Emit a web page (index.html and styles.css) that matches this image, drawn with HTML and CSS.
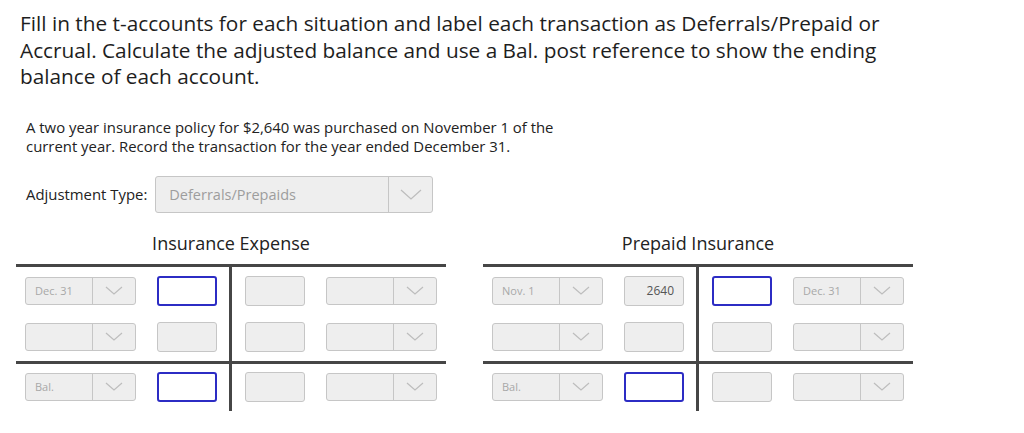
FILE: index.html
```html
<!DOCTYPE html>
<html lang="en">
<head>
    <meta charset="UTF-8">
    <meta name="viewport" content="width=device-width, initial-scale=1.0">
    <title>T-Accounts</title>
    <link rel="stylesheet" href="styles.css">
</head>
<body>
    <p class="instructions">Fill in the t-accounts for each situation and label each transaction as Deferrals/Prepaid or Accrual. Calculate the adjusted balance and use a Bal. post reference to show the ending balance of each account.</p>

    <p class="question">A two year insurance policy for $2,640 was purchased on November 1 of the<br>current year. Record the transaction for the year ended December 31.</p>

    <div class="adjustment">
        <span class="adjustment-label">Adjustment Type:</span>
        <div class="select select-large">
            <span class="select-value">Deferrals/Prepaids</span>
            <span class="select-arrow">
                <svg width="22" height="11" viewBox="0 0 22 11"><polyline points="1,1 11,10 21,1" fill="none" stroke="#bdbdbd" stroke-width="1.3"/></svg>
            </span>
        </div>
    </div>

    <div class="accounts">
        <!-- Insurance Expense -->
        <div class="t-account">
            <div class="t-title">Insurance Expense</div>
            <div class="t-body">
                <div class="t-side debit">
                    <div class="t-row">
                        <div class="select"><span class="select-value">Dec. 31</span><span class="select-arrow"><svg width="18" height="9" viewBox="0 0 18 9"><polyline points="1,1 9,8 17,1" fill="none" stroke="#bdbdbd" stroke-width="1.2"/></svg></span></div>
                        <div class="amount active"></div>
                    </div>
                    <div class="t-row">
                        <div class="select"><span class="select-value"></span><span class="select-arrow"><svg width="18" height="9" viewBox="0 0 18 9"><polyline points="1,1 9,8 17,1" fill="none" stroke="#bdbdbd" stroke-width="1.2"/></svg></span></div>
                        <div class="amount"></div>
                    </div>
                </div>
                <div class="t-side credit">
                    <div class="t-row">
                        <div class="amount"></div>
                        <div class="select"><span class="select-value"></span><span class="select-arrow"><svg width="18" height="9" viewBox="0 0 18 9"><polyline points="1,1 9,8 17,1" fill="none" stroke="#bdbdbd" stroke-width="1.2"/></svg></span></div>
                    </div>
                    <div class="t-row">
                        <div class="amount"></div>
                        <div class="select"><span class="select-value"></span><span class="select-arrow"><svg width="18" height="9" viewBox="0 0 18 9"><polyline points="1,1 9,8 17,1" fill="none" stroke="#bdbdbd" stroke-width="1.2"/></svg></span></div>
                    </div>
                </div>
            </div>
            <div class="t-body t-balance">
                <div class="t-side debit">
                    <div class="t-row">
                        <div class="select"><span class="select-value">Bal.</span><span class="select-arrow"><svg width="18" height="9" viewBox="0 0 18 9"><polyline points="1,1 9,8 17,1" fill="none" stroke="#bdbdbd" stroke-width="1.2"/></svg></span></div>
                        <div class="amount active"></div>
                    </div>
                </div>
                <div class="t-side credit">
                    <div class="t-row">
                        <div class="amount"></div>
                        <div class="select"><span class="select-value"></span><span class="select-arrow"><svg width="18" height="9" viewBox="0 0 18 9"><polyline points="1,1 9,8 17,1" fill="none" stroke="#bdbdbd" stroke-width="1.2"/></svg></span></div>
                    </div>
                </div>
            </div>
        </div>

        <!-- Prepaid Insurance -->
        <div class="t-account">
            <div class="t-title">Prepaid Insurance</div>
            <div class="t-body">
                <div class="t-side debit">
                    <div class="t-row">
                        <div class="select"><span class="select-value">Nov. 1</span><span class="select-arrow"><svg width="18" height="9" viewBox="0 0 18 9"><polyline points="1,1 9,8 17,1" fill="none" stroke="#bdbdbd" stroke-width="1.2"/></svg></span></div>
                        <div class="amount filled">2640</div>
                    </div>
                    <div class="t-row">
                        <div class="select"><span class="select-value"></span><span class="select-arrow"><svg width="18" height="9" viewBox="0 0 18 9"><polyline points="1,1 9,8 17,1" fill="none" stroke="#bdbdbd" stroke-width="1.2"/></svg></span></div>
                        <div class="amount"></div>
                    </div>
                </div>
                <div class="t-side credit">
                    <div class="t-row">
                        <div class="amount active"></div>
                        <div class="select"><span class="select-value">Dec. 31</span><span class="select-arrow"><svg width="18" height="9" viewBox="0 0 18 9"><polyline points="1,1 9,8 17,1" fill="none" stroke="#bdbdbd" stroke-width="1.2"/></svg></span></div>
                    </div>
                    <div class="t-row">
                        <div class="amount"></div>
                        <div class="select"><span class="select-value"></span><span class="select-arrow"><svg width="18" height="9" viewBox="0 0 18 9"><polyline points="1,1 9,8 17,1" fill="none" stroke="#bdbdbd" stroke-width="1.2"/></svg></span></div>
                    </div>
                </div>
            </div>
            <div class="t-body t-balance">
                <div class="t-side debit">
                    <div class="t-row">
                        <div class="select"><span class="select-value">Bal.</span><span class="select-arrow"><svg width="18" height="9" viewBox="0 0 18 9"><polyline points="1,1 9,8 17,1" fill="none" stroke="#bdbdbd" stroke-width="1.2"/></svg></span></div>
                        <div class="amount active"></div>
                    </div>
                </div>
                <div class="t-side credit">
                    <div class="t-row">
                        <div class="amount"></div>
                        <div class="select"><span class="select-value"></span><span class="select-arrow"><svg width="18" height="9" viewBox="0 0 18 9"><polyline points="1,1 9,8 17,1" fill="none" stroke="#bdbdbd" stroke-width="1.2"/></svg></span></div>
                    </div>
                </div>
            </div>
        </div>
    </div>
</body>
</html>
```
FILE: styles.css
```css
body {
    font-family: 'Open Sans', 'Noto Sans', sans-serif;
    margin: 0;
    padding: 10px 0 0 0;
    background-color: #ffffff;
    color: #222222;
}

p {
    margin: 0;
}

.instructions {
    margin-left: 20px;
    width: 900px;
    font-size: 20.8px;
    line-height: 26.5px;
    color: #1e1e1e;
}

.question {
    margin: 28px 0 0 26px;
    font-size: 14.9px;
    line-height: 19px;
}

.adjustment {
    display: flex;
    align-items: center;
    margin: 20px 0 0 26px;
    gap: 8px;
}

.adjustment-label {
    font-size: 14.9px;
    line-height: 19px;
}

/* dropdowns */
.select {
    display: flex;
    box-sizing: border-box;
    width: 111px;
    height: 28px;
    background: #eeeeee;
    border: 1.5px solid #c6c6c6;
    border-radius: 3px;
}

.select-value {
    flex: 1;
    display: flex;
    align-items: center;
    padding-left: 9px;
    font-size: 11px;
    color: #a8a8a8;
}

.select-arrow {
    display: flex;
    align-items: center;
    justify-content: center;
    width: 42px;
    border-left: 1.5px solid #c6c6c6;
}

.select-large {
    width: 278px;
    height: 37px;
}

.select-large .select-value {
    padding-left: 13px;
    font-size: 14.5px;
    color: #9d9d9d;
}

.select-large .select-arrow {
    width: 43px;
}

/* amount boxes */
.amount {
    box-sizing: border-box;
    width: 60px;
    height: 30px;
    background: #eeeeee;
    border: 1.5px solid #c6c6c6;
    border-radius: 3px;
    font-size: 12px;
    line-height: 27px;
    text-align: right;
    padding-right: 9px;
    color: #555555;
}

.amount.active {
    background: #ffffff;
    border: 2px solid #2c2cc4;
}

/* t-accounts */
.accounts {
    display: flex;
    gap: 37px;
    margin: 19px 0 0 16px;
}

.t-account {
    width: 430px;
}

.t-title {
    text-align: center;
    font-size: 18px;
    line-height: 22px;
    margin-bottom: 10px;
}

.t-body {
    display: flex;
    border-top: 3px solid #464646;
}

.t-side {
    display: flex;
    flex-direction: column;
    gap: 16px;
    box-sizing: border-box;
    padding: 9px 0;
}

.t-side.debit {
    width: 216px;
    padding-left: 9px;
    padding-right: 12px;
    border-right: 3px solid #464646;
}

.t-side.credit {
    flex: 1;
    padding-left: 13px;
    padding-right: 9px;
}

.t-balance .t-side {
    padding: 8px 0 9px;
}

.t-balance .t-side.debit {
    padding-left: 9px;
    padding-right: 12px;
}

.t-balance .t-side.credit {
    padding-left: 13px;
    padding-right: 9px;
}

.t-row {
    display: flex;
    align-items: center;
    justify-content: space-between;
}
```
